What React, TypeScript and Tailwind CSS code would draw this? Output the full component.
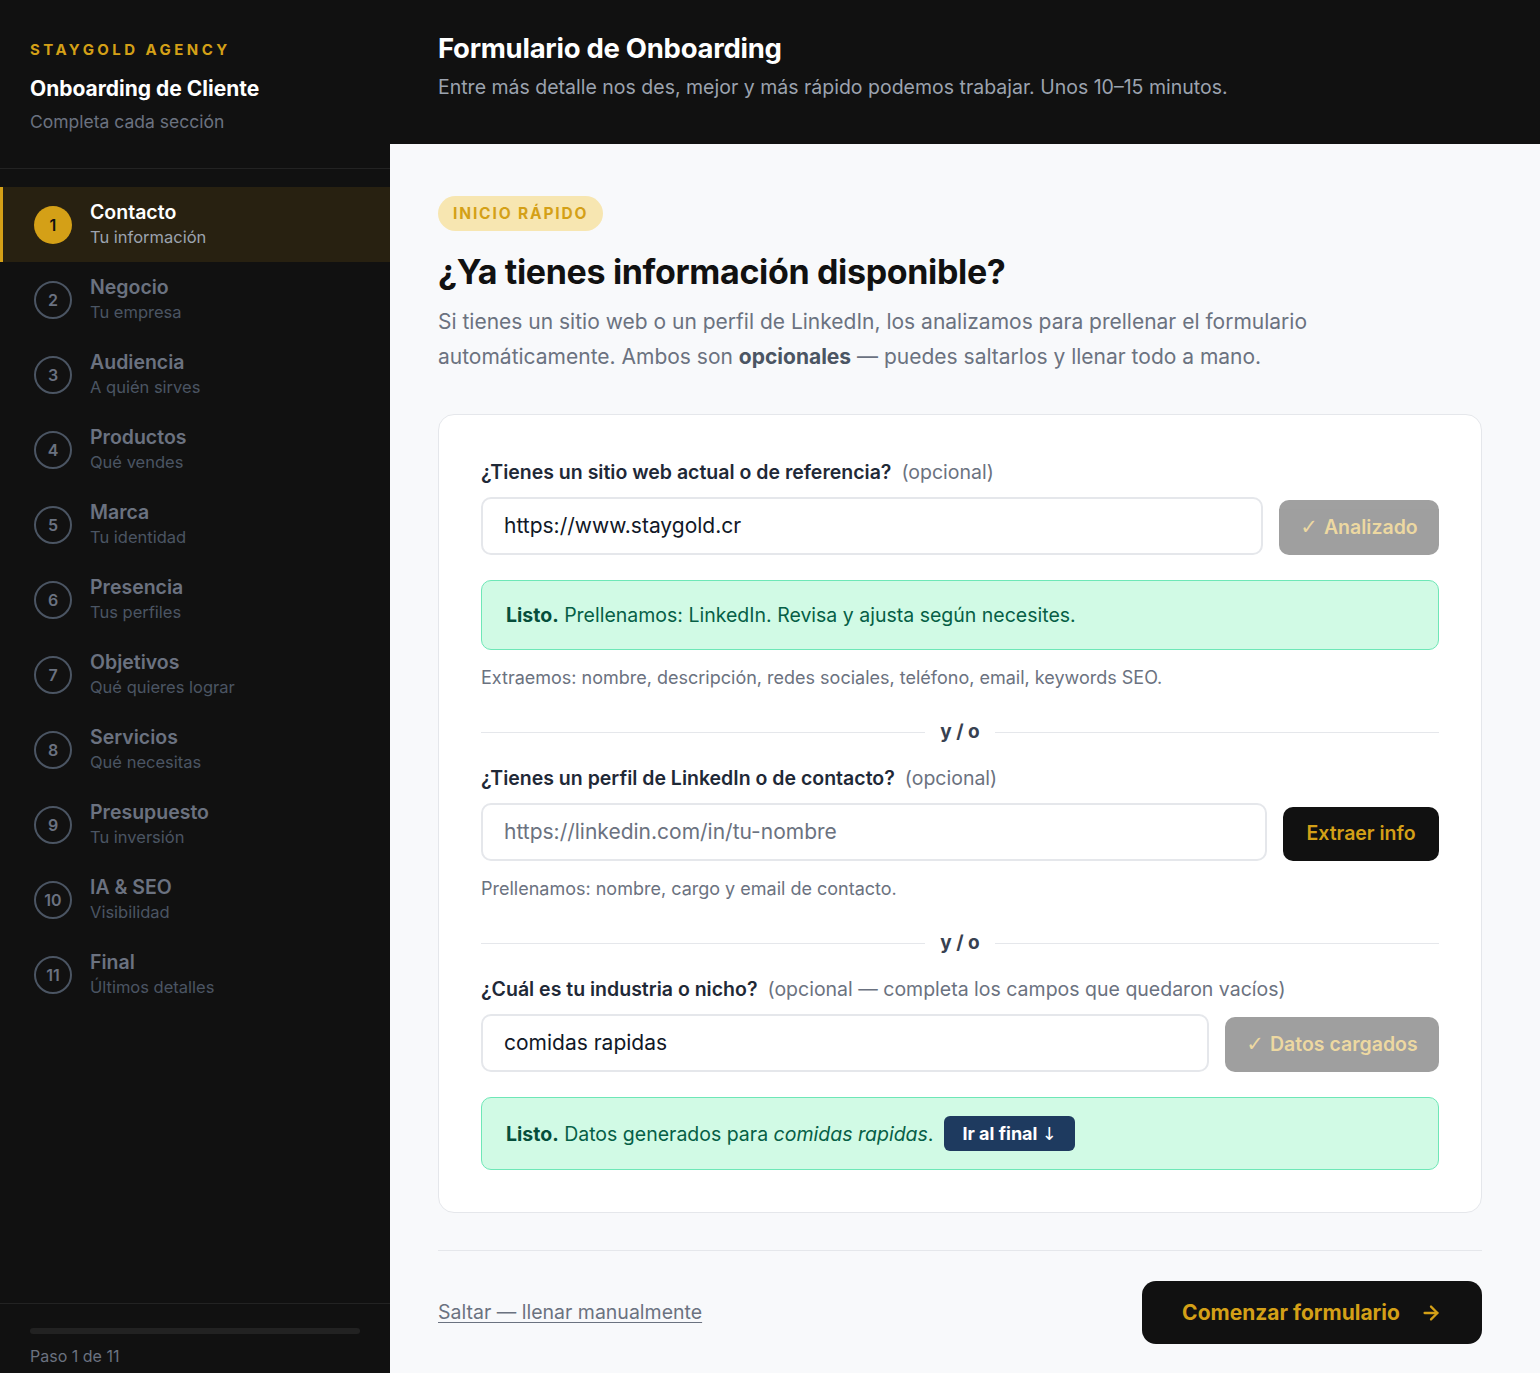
import { ArrowRight } from "lucide-react";

const steps = [
  { n: 1, title: "Contacto", sub: "Tu información" },
  { n: 2, title: "Negocio", sub: "Tu empresa" },
  { n: 3, title: "Audiencia", sub: "A quién sirves" },
  { n: 4, title: "Productos", sub: "Qué vendes" },
  { n: 5, title: "Marca", sub: "Tu identidad" },
  { n: 6, title: "Presencia", sub: "Tus perfiles" },
  { n: 7, title: "Objetivos", sub: "Qué quieres lograr" },
  { n: 8, title: "Servicios", sub: "Qué necesitas" },
  { n: 9, title: "Presupuesto", sub: "Tu inversión" },
  { n: 10, title: "IA & SEO", sub: "Visibilidad" },
  { n: 11, title: "Final", sub: "Últimos detalles" },
];

function Sidebar({ current = 1 }: { current?: number }) {
  return (
    <aside className="flex w-[390px] shrink-0 flex-col bg-[#111111]">
      <div className="border-b border-[#232323] px-[30px] pb-[34px] pt-[40px]">
        <div className="text-[15px] font-bold uppercase leading-[20px] tracking-[0.23em] text-[#d4a017]">
          Staygold Agency
        </div>
        <div className="mt-[15px] text-[21px] font-bold leading-[28px] text-white">Onboarding de Cliente</div>
        <div className="mt-[7px] text-[17.5px] leading-[24px] text-[#6b7280]">Completa cada sección</div>
      </div>

      <nav className="pt-[18px]">
        {steps.map((s) => {
          const active = s.n === current;
          return (
            <div
              key={s.n}
              className={
                active
                  ? "flex h-[75px] items-center gap-[18px] border-l-[3px] border-[#d4a017] bg-[#282111] pl-[31px]"
                  : "flex h-[75px] items-center gap-[18px] border-l-[3px] border-transparent pl-[31px]"
              }
            >
              <div
                className={
                  active
                    ? "flex size-[38px] items-center justify-center rounded-full bg-[#d4a017] text-[16px] font-semibold text-[#111]"
                    : "flex size-[38px] items-center justify-center rounded-full border-2 border-[#4b5563] text-[16px] font-semibold text-[#6b7280]"
                }
              >
                {s.n}
              </div>
              <div>
                <div
                  className={
                    active
                      ? "text-[19.5px] font-semibold leading-[24px] text-white"
                      : "text-[19.5px] font-semibold leading-[24px] text-[#6b7280]"
                  }
                >
                  {s.title}
                </div>
                <div
                  className={
                    active
                      ? "mt-[1px] text-[16.5px] leading-[24px] text-[#9ca3af]"
                      : "mt-[1px] text-[16.5px] leading-[24px] text-[#4b5563]"
                  }
                >
                  {s.sub}
                </div>
              </div>
            </div>
          );
        })}
      </nav>

      <div className="mt-auto border-t border-[#232323] px-[30px] pb-[6px] pt-[24px]">
        <div className="h-[6px] w-full rounded-full bg-[#222222]" />
        <div className="mt-[11px] text-[16px] leading-[22px] text-[#6b7280]">Paso 1 de 11</div>
      </div>
    </aside>
  );
}

function Label({ q, hint }: { q: string; hint: string }) {
  return (
    <div className="text-[19.5px] leading-[26px]">
      <span className="font-semibold text-[#1f2937]">{q}</span>
      <span className="ml-[10px] text-[#6b7280]">{hint}</span>
    </div>
  );
}

function Field({ value, placeholder }: { value?: string; placeholder?: string }) {
  return (
    <div className="flex h-[58px] flex-1 items-center rounded-[10px] border-2 border-[#e5e7eb] bg-white pl-[21px] text-[21px]">
      {value ? (
        <span className="text-[#111827]">{value}</span>
      ) : (
        <span className="text-[#6b7280]">{placeholder}</span>
      )}
    </div>
  );
}

function Check() {
  return (
    <span className="mr-[6px] font-['DejaVu_Sans',sans-serif] text-[21px] font-bold leading-none">✓</span>
  );
}

function Divider() {
  return (
    <div className="mt-[29px] flex items-center gap-[15px]">
      <div className="h-px flex-1 bg-[#e5e7eb]" />
      <span className="text-[19px] font-bold leading-[26px] text-[#374151]">y / o</span>
      <div className="h-px flex-1 bg-[#e5e7eb]" />
    </div>
  );
}

export default function App() {
  return (
    <div className="flex min-h-screen font-['Inter',sans-serif]">
      <Sidebar current={1} />

      <main className="flex flex-1 flex-col bg-[#f8f9fb]">
        <header className="h-[144px] bg-[#111111] px-12 pt-[31px]">
          <h1 className="text-[27.5px] font-bold leading-[34px] tracking-[-0.01em] text-white">Formulario de Onboarding</h1>
          <p className="mt-[8px] text-[19.5px] leading-[28px] text-[#9ca3af]">
            Entre más detalle nos des, mejor y más rápido podemos trabajar. Unos 10–15 minutos.
          </p>
        </header>

        <div className="pb-[29px] pl-12 pr-[58px] pt-[52px]">
          <span className="inline-flex h-[35px] items-center rounded-full bg-[#f7e6b1] px-[15px] text-[15.5px] font-bold tracking-[0.12em] text-[#d4a017]">
            INICIO RÁPIDO
          </span>
          <h2 className="mt-[21px] text-[34px] font-bold leading-[40px] tracking-[-0.01em] text-[#111111]">
            ¿Ya tienes información disponible?
          </h2>
          <p className="mt-[12px] max-w-[900px] text-[21px] leading-[35px] text-[#6b7280]">
            Si tienes un sitio web o un perfil de LinkedIn, los analizamos para prellenar el formulario automáticamente.
            Ambos son <strong className="font-bold text-[#4b5563]">opcionales</strong> — puedes saltarlos y llenar todo a
            mano.
          </p>

          <section className="mt-[40px] rounded-[16px] border border-[#e5e7eb] bg-white px-[42px] pb-[42px] pt-[44px]">
            <Label q="¿Tienes un sitio web actual o de referencia?" hint="(opcional)" />
            <div className="mt-[12px] flex items-end gap-[16px]">
              <Field value="https://www.staygold.cr" />
              <button className="flex h-[55px] w-[160px] items-center justify-center rounded-[10px] bg-[#111111] text-[19.5px] font-semibold text-[#d4a017] opacity-40">
                <Check />
                Analizado
              </button>
            </div>
            <div className="mt-[25px] rounded-[10px] border border-[#6ee7b7] bg-[#d1fae5] px-[24px] py-[21px] text-[19.5px] leading-[26px] text-[#065f46]">
              <strong className="font-bold text-[#064e3b]">Listo.</strong> Prellenamos: LinkedIn. Revisa y ajusta según
              necesites.
            </div>
            <p className="mt-[16px] text-[18px] leading-[24px] text-[#6b7280]">
              Extraemos: nombre, descripción, redes sociales, teléfono, email, keywords SEO.
            </p>

            <Divider />

            <div className="mt-[20px]">
              <Label q="¿Tienes un perfil de LinkedIn o de contacto?" hint="(opcional)" />
            </div>
            <div className="mt-[12px] flex items-end gap-[16px]">
              <Field placeholder="https://linkedin.com/in/tu-nombre" />
              <button className="h-[54px] w-[156px] rounded-[10px] bg-[#111111] text-[19.5px] font-semibold text-[#d4a017]">
                Extraer info
              </button>
            </div>
            <p className="mt-[16px] text-[18px] leading-[24px] text-[#6b7280]">
              Prellenamos: nombre, cargo y email de contacto.
            </p>

            <Divider />

            <div className="mt-[20px]">
              <Label
                q="¿Cuál es tu industria o nicho?"
                hint="(opcional — completa los campos que quedaron vacíos)"
              />
            </div>
            <div className="mt-[12px] flex items-end gap-[16px]">
              <Field value="comidas rapidas" />
              <button className="flex h-[55px] w-[214px] items-center justify-center rounded-[10px] bg-[#111111] text-[19.5px] font-semibold text-[#d4a017] opacity-40">
                <Check />
                Datos cargados
              </button>
            </div>
            <div className="mt-[25px] flex items-center rounded-[10px] border border-[#6ee7b7] bg-[#d1fae5] px-[24px] py-[18px] text-[19.5px] leading-[26px] text-[#065f46]">
              <span>
                <strong className="font-bold text-[#064e3b]">Listo.</strong> Datos generados para{" "}
                <em>comidas rapidas</em>.
              </span>
              <button className="ml-[11px] h-[35px] rounded-[6px] bg-[#1e3a5f] px-[18px] text-[18px] font-bold text-white">
                Ir al final <span className="font-['DejaVu_Sans',sans-serif] font-normal">↓</span>
              </button>
            </div>
          </section>

          <div className="mt-[37px] flex items-center justify-between border-t border-[#e5e7eb] pt-[30px]">
            <a className="text-[19.5px] text-[#6b7280] underline underline-offset-[3px]">Saltar — llenar manualmente</a>
            <button className="flex h-[63px] w-[340px] items-center justify-center gap-[20px] rounded-[14px] bg-[#111111] text-[21px] font-bold text-[#d4a017]">
              Comenzar formulario
              <ArrowRight className="size-[22px]" strokeWidth={2.5} />
            </button>
          </div>
        </div>
      </main>
    </div>
  );
}
